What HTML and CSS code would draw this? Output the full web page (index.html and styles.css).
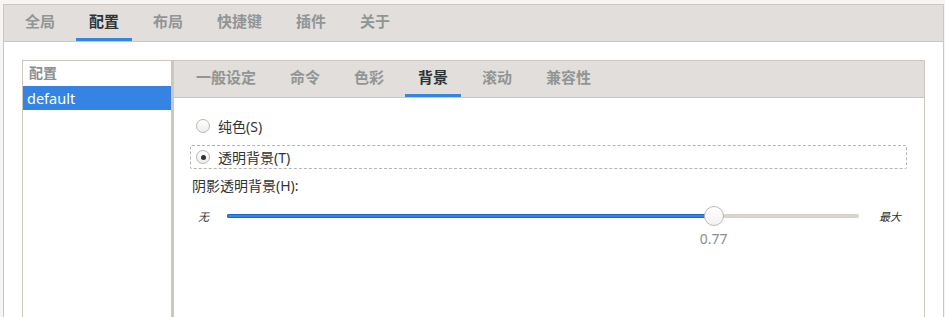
FILE: index.html
```html
<!DOCTYPE html>
<html lang="zh-CN">
<head>
  <meta charset="UTF-8">
  <title>首选项</title>
  <link rel="stylesheet" href="styles.css">
</head>
<body>
  <div class="window">
    <div class="tabbar">
      <div class="tab">全局</div>
      <div class="tab active">配置</div>
      <div class="tab">布局</div>
      <div class="tab">快捷键</div>
      <div class="tab">插件</div>
      <div class="tab">关于</div>
    </div>

    <div class="page">
      <div class="panel">
        <div class="profile-list">
          <div class="list-header">配置</div>
          <div class="list-row selected">default</div>
        </div>

        <div class="notebook">
          <div class="tabbar inner">
            <div class="tab">一般设定</div>
            <div class="tab">命令</div>
            <div class="tab">色彩</div>
            <div class="tab active">背景</div>
            <div class="tab">滚动</div>
            <div class="tab">兼容性</div>
          </div>

          <div class="content">
            <div class="radio-row">
              <span class="radio"></span>
              <span>纯色(S)</span>
            </div>
            <div class="radio-row focused">
              <span class="radio checked"></span>
              <span>透明背景(T)</span>
            </div>
            <div class="field-label">阴影透明背景(H):</div>

            <div class="slider-row">
              <span class="mark">无</span>
              <div class="slider">
                <div class="track"></div>
                <div class="fill" style="width: 77%;"></div>
                <div class="knob" style="left: 77%;"></div>
                <div class="value" style="left: 77%;">0.77</div>
              </div>
              <span class="mark">最大</span>
            </div>
          </div>
        </div>
      </div>
    </div>
  </div>
</body>
</html>
```

FILE: styles.css
```css
html, body {
  margin: 0;
  padding: 0;
  height: 100%;
  overflow: hidden;
}
body {
  background: #f6f5f4;
  font-family: 'Noto Sans', 'Noto Sans CJK SC', sans-serif;
  color: #2e3436;
  font-size: 14px;
}
.window {
  display: flex;
  flex-direction: column;
  margin: 4px 1px 0 3px;
  border: 1px solid #cdc7c2;
  border-bottom: none;
  background: #fff;
  height: calc(100% - 4px);
  box-sizing: border-box;
}
.tabbar {
  display: flex;
  gap: 8px;
  height: 36px;
  padding: 0 8px;
  background: #e1dedb;
  border-bottom: 1px solid #cdc7c2;
  flex-shrink: 0;
}
.tabbar.inner {
  padding-left: 9px;
}
.tab {
  padding: 0 13px;
  font-size: 15px;
  font-weight: bold;
  color: #929595;
  line-height: 33px;
  border-bottom: 3px solid transparent;
}
.tab.active {
  color: #2e3436;
  border-bottom-color: #3584e4;
}
.page {
  flex: 1;
  display: flex;
  padding: 18px 18px 0 18px;
  min-height: 0;
}
.panel {
  flex: 1;
  display: flex;
  border: 1px solid #cdc7c2;
  border-bottom: none;
}
.profile-list {
  width: 148px;
  border-right: 3px solid #cdc7c2;
}
.list-header {
  height: 25px;
  line-height: 24px;
  padding-left: 6px;
  font-weight: bold;
  color: #8b8e8f;
}
.list-row {
  height: 24px;
  line-height: 24px;
  padding-left: 4px;
  font-size: 14.5px;
}
.list-row.selected {
  background: #3584e4;
  color: #fff;
}
.notebook {
  flex: 1;
}
.content {
  padding: 16px 17px 0 16px;
}
.radio-row {
  display: flex;
  align-items: center;
  gap: 8px;
  height: 22px;
  padding-left: 5px;
  margin-bottom: 7px;
  border: 1px dashed transparent;
  border-radius: 2px;
}
.radio-row.focused {
  border-color: #b8b3ae;
}
.radio {
  width: 12px;
  height: 12px;
  border-radius: 50%;
  border: 1px solid #bcb6b0;
  background: linear-gradient(#ffffff, #efedeb);
  position: relative;
}
.radio.checked::after {
  content: "";
  position: absolute;
  left: 3.5px;
  top: 3.5px;
  width: 5px;
  height: 5px;
  border-radius: 50%;
  background: #2e3436;
}
.field-label {
  padding-left: 2px;
  margin-top: 5px;
  line-height: 20px;
}
.slider-row {
  display: flex;
  align-items: center;
  margin-top: 10px;
  padding: 0 6px 0 8px;
  height: 20px;
}
.mark {
  font-size: 11px;
  font-style: italic;
}
.slider {
  flex: 1;
  position: relative;
  height: 20px;
  margin: 0 20px 0 18px;
}
.track {
  position: absolute;
  left: 0;
  right: 0;
  top: 8px;
  height: 4px;
  border-radius: 2px;
  background: #d8d4d0;
}
.fill {
  position: absolute;
  left: 0;
  top: 8px;
  height: 4px;
  border-radius: 2px;
  background: #3584e4;
  box-shadow: inset 0 0 0 1px #1b6acb;
}
.knob {
  position: absolute;
  top: 0;
  width: 18px;
  height: 18px;
  margin-left: -10px;
  border-radius: 50%;
  border: 1px solid #bfb8b1;
  background: linear-gradient(#ffffff, #f4f2f1);
}
.value {
  position: absolute;
  top: 23px;
  transform: translateX(-50%);
  color: #8b8e8f;
  font-size: 14px;
}
```
